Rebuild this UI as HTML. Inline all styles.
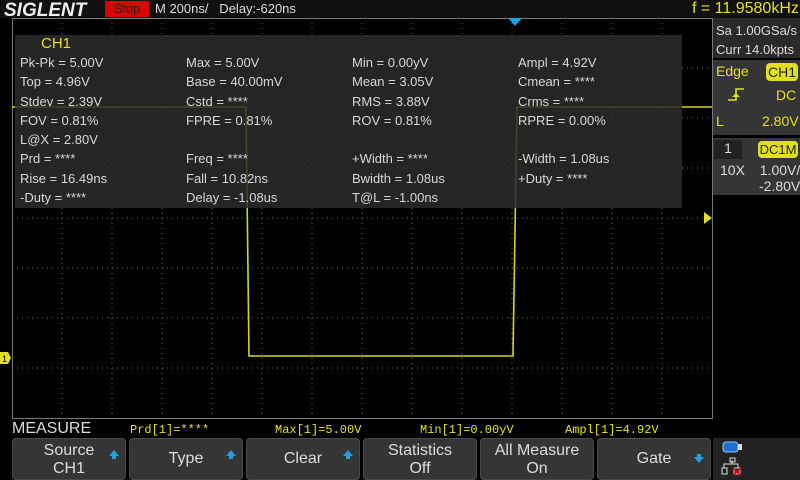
<!DOCTYPE html>
<html><head><style>
*{margin:0;padding:0;box-sizing:border-box}
body{width:800px;height:480px;background:#000;overflow:hidden;position:relative;font-family:"Liberation Sans",sans-serif;color:#ddd}
.a{position:absolute;white-space:nowrap}
.m{font-size:13px;color:#d8d8d8}
.y{color:#e8e020}
.btn{position:absolute;top:438px;height:42px;width:114px;background:#353535;border:1px solid #4a4a4a;border-radius:4px;text-align:center;font-size:16px;color:#ddd;line-height:18px}
.arr{position:absolute;right:6px;top:11px;width:0;height:0;border-left:5px solid transparent;border-right:5px solid transparent;border-bottom:6px solid #1fa0e0}
.arr:after{content:"";position:absolute;left:-2px;top:5px;width:4px;height:4px;background:#1fa0e0}
.rp{position:absolute;left:713px;background:#353535}
</style></head><body>
<svg class="a" style="left:0;top:0" width="800" height="480">
<rect x="0" y="0" width="800" height="18" fill="#111"/>
<g stroke="#666" stroke-width="1" stroke-dasharray="1,4">
<path d="M62 18V418M112 18V418M162 18V418M212 18V418M262 18V418M312 18V418M362 18V418M412 18V418M462 18V418M512 18V418M562 18V418M612 18V418M662 18V418M12 68H712M12 118H712M12 168H712M12 218H712M12 268H712M12 318H712M12 368H712"/>
</g>
<rect x="12.5" y="18.5" width="700" height="400" fill="none" stroke="#777"/>
<path d="M12 107H246L249 356H513L517 107H712" stroke="#d6d620" stroke-width="1.6" fill="none"/>
<rect x="15" y="35" width="667" height="173" fill="#2b2b2b" fill-opacity="0.86"/>
<path d="M508 18h14l-7 8z" fill="#1fa0e0"/>
<path d="M712 218l-8-6v12z" fill="#e0e020"/>
<path d="M0 352h8l3 6-3 6H0z" fill="#e0e020"/>
<text x="2" y="362" font-size="9" fill="#000" font-family="Liberation Sans">1</text>
</svg>
<div class="a" style="left:4px;top:0;font:bold italic 19px 'Liberation Sans',sans-serif;color:#eee">SIGLENT</div>
<div class="a" style="left:105px;top:1px;width:44px;height:16px;background:#d00;color:#222;font-size:13px;text-align:center;line-height:16px">Stop</div>
<div class="a" style="left:155px;top:1px;font-size:13px;color:#ddd">M 200ns/&nbsp;&nbsp;&nbsp;Delay:-620ns</div>
<div class="a y" style="left:692px;top:0;font-size:16px">f = 11.9580kHz</div>
<div class="a y" style="left:41px;top:35px;font-size:15px">CH1</div>
<div class="a m" style="left:20px;top:53px;line-height:19.3px">Pk-Pk = 5.00V<br>Top = 4.96V<br>Stdev = 2.39V<br>FOV = 0.81%<br>L@X = 2.80V<br>Prd = ****<br>Rise = 16.49ns<br>-Duty = ****</div>
<div class="a m" style="left:186px;top:53px;line-height:19.3px">Max = 5.00V<br>Base = 40.00mV<br>Cstd = ****<br>FPRE = 0.81%<br><br>Freq = ****<br>Fall = 10.82ns<br>Delay = -1.08us</div>
<div class="a m" style="left:352px;top:53px;line-height:19.3px">Min = 0.00yV<br>Mean = 3.05V<br>RMS = 3.88V<br>ROV = 0.81%<br><br>+Width = ****<br>Bwidth = 1.08us<br>T@L = -1.00ns</div>
<div class="a m" style="left:518px;top:53px;line-height:19.3px">Ampl = 4.92V<br>Cmean = ****<br>Crms = ****<br>RPRE = 0.00%<br><br>-Width = 1.08us<br>+Duty = ****</div>
<div class="rp" style="top:18px;height:40px;width:87px;background:#2a2a2a;font-size:13px;padding:3px 3px;line-height:19px">Sa 1.00GSa/s<br>Curr 14.0kpts</div>
<div class="rp" style="top:60px;height:75px;width:87px"></div>
<div class="a y" style="left:716px;top:63px;font-size:14px">Edge</div>
<div class="a" style="left:766px;top:63px;width:32px;height:18px;background:#e0e020;color:#222;border-radius:4px;font-size:14px;text-align:center;line-height:18px">CH1</div>
<svg class="a" style="left:727px;top:87px" width="20" height="15"><path d="M1 13h8V2h8" stroke="#e0e020" stroke-width="1.6" fill="none"/><path d="M5 10l4-4 4 4z" fill="#e0e020"/></svg>
<div class="a y" style="left:776px;top:87px;font-size:14px">DC</div>
<div class="a y" style="left:716px;top:113px;font-size:14px">L</div>
<div class="a y" style="left:762px;top:113px;font-size:14px">2.80V</div>
<div class="rp" style="top:138px;height:57px;width:87px"></div>
<div class="a" style="left:714px;top:140px;width:28px;height:19px;background:#222;font-size:14px;text-align:center;color:#ddd">1</div>
<div class="a" style="left:758px;top:141px;width:40px;height:17px;background:#e0e020;color:#222;border-radius:4px;font-size:13px;text-align:center;line-height:17px">DC1M</div>
<div class="a" style="left:720px;top:162px;font-size:14px;color:#ddd">10X</div>
<div class="a" style="left:759px;top:162px;font-size:14px;color:#ddd;line-height:16px;text-align:right">1.00V/<br>-2.80V</div>
<div class="a" style="left:12px;top:420px;font-size:16px;color:#ddd">MEASURE</div>
<div class="a y" style="left:130px;top:423px;font:12px 'Liberation Mono',monospace">Prd[1]=****</div>
<div class="a y" style="left:275px;top:423px;font:12px 'Liberation Mono',monospace">Max[1]=5.00V</div>
<div class="a y" style="left:420px;top:423px;font:12px 'Liberation Mono',monospace">Min[1]=0.00yV</div>
<div class="a y" style="left:565px;top:423px;font:12px 'Liberation Mono',monospace">Ampl[1]=4.92V</div>
<div class="btn" style="left:12px;padding-top:3px">Source<br>CH1<div class="arr"></div></div>
<div class="btn" style="left:129px;line-height:40px">Type<div class="arr"></div></div>
<div class="btn" style="left:246px;line-height:40px">Clear<div class="arr"></div></div>
<div class="btn" style="left:363px;padding-top:3px">Statistics<br>Off</div>
<div class="btn" style="left:480px;padding-top:3px">All Measure<br>On</div>
<div class="btn" style="left:597px;line-height:40px">Gate<div class="arr" style="transform:rotate(180deg);top:18px"></div></div>
<div class="rp" style="top:438px;height:42px;width:87px;background:#222"></div>
<svg class="a" style="left:720px;top:440px" width="30" height="38"><rect x="3" y="2" width="15" height="10" rx="3" fill="#1f6fd0" stroke="#8cf"/><rect x="18" y="4" width="4" height="6" fill="#ddd"/><path d="M12 20v4M4 28v-4h14v4M2 28h5v6H2zM14 28h6v6h-6zM10 18h5v4h-5z" stroke="#ddd" fill="none"/><path d="M13 28l8 7M21 28l-8 7" stroke="#e00" stroke-width="1.5"/></svg>
</body></html>
